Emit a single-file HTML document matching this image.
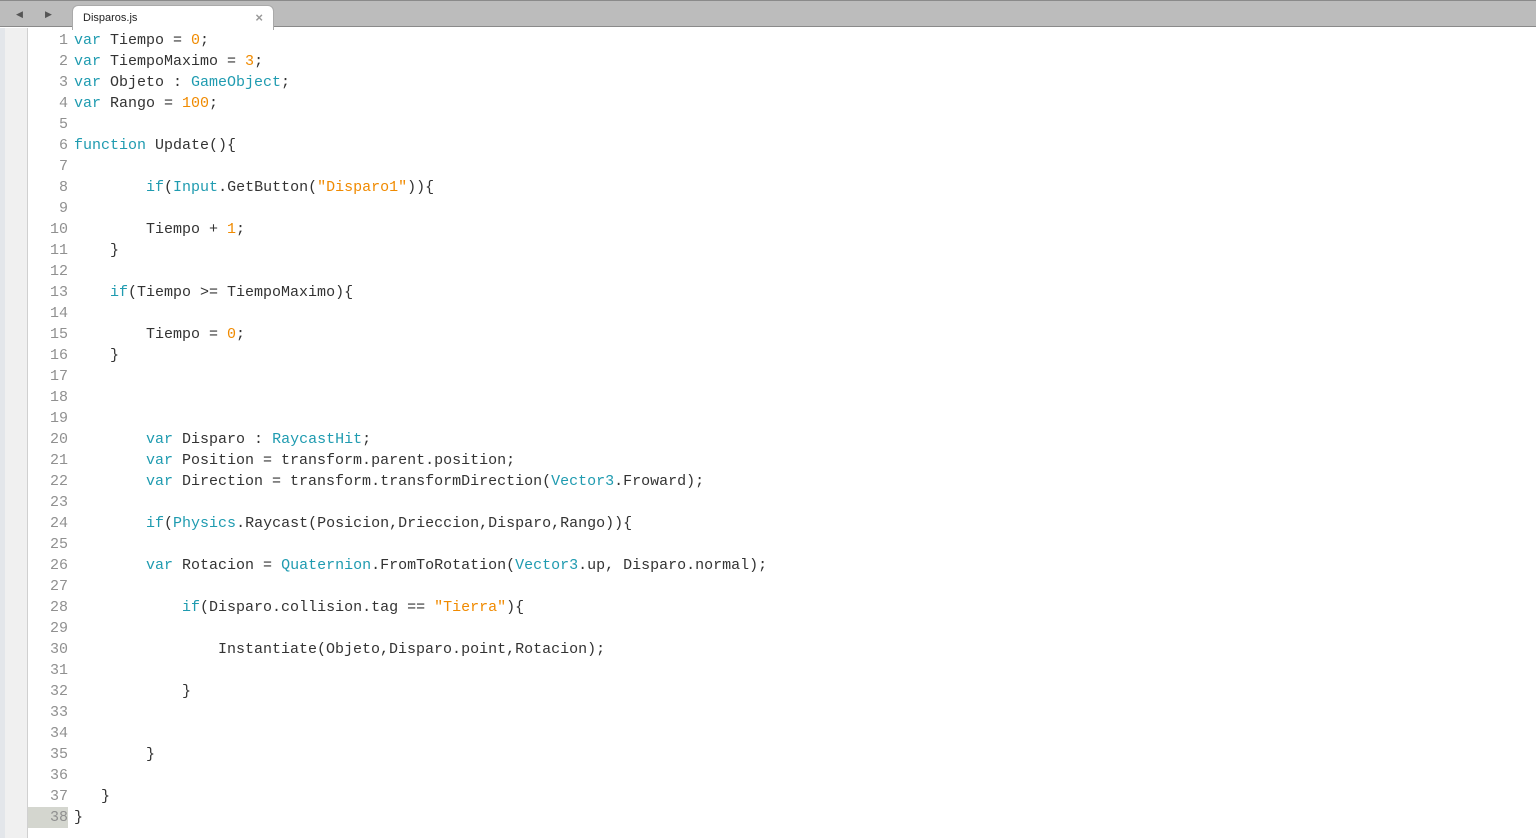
<!DOCTYPE html>
<html><head><style>
body{margin:0;width:1536px;height:838px;overflow:hidden;background:#fff;position:relative;font-family:"Liberation Sans",sans-serif}
.bar{position:absolute;left:0;top:0;width:1536px;height:27px;background:#bcbcbc;border-top:1px solid #8a8a8a;border-bottom:1px solid #8a8a8a;box-sizing:border-box}
.tab{position:absolute;left:72px;top:4px;width:202px;height:25px;background:#fff;border:1px solid #aaa;border-bottom:none;border-radius:6px 6px 0 0;box-sizing:border-box}
.tab span{position:absolute;left:10px;top:6px;font-size:11px;color:#222}
.tab b{position:absolute;right:10px;top:4px;font-size:13px;color:#999;font-weight:bold}
.arr{position:absolute;top:8px;font-size:9px;color:#555}
.ls{position:absolute;left:0;top:28px;width:5px;height:810px;background:#e3e6ea}
.gut{position:absolute;left:5px;top:28px;width:22px;height:810px;background:#f0f0f0;border-right:1px solid #d0d0d0}
.code{position:absolute;left:28px;top:30px;font-family:"Liberation Mono",monospace;font-size:15px;line-height:21px;color:#333;white-space:pre}
.n{display:inline-block;width:40px;text-align:right;color:#909090;margin-right:6px}
.cur{background:#d4d6cf}
.k{color:#1f9bb0}.o{color:#f08a00}
</style></head><body>
<div class="bar"><span class="arr" style="left:16px">◀</span><span class="arr" style="left:45px">▶</span><div class="tab"><span>Disparos.js</span><b>×</b></div></div>
<div class="ls"></div><div class="gut"></div>
<div class="code"><span class="n">1</span><span class="k">var</span> Tiempo = <span class="o">0</span>;
<span class="n">2</span><span class="k">var</span> TiempoMaximo = <span class="o">3</span>;
<span class="n">3</span><span class="k">var</span> Objeto : <span class="k">GameObject</span>;
<span class="n">4</span><span class="k">var</span> Rango = <span class="o">100</span>;
<span class="n">5</span>
<span class="n">6</span><span class="k">function</span> Update(){
<span class="n">7</span>
<span class="n">8</span>        <span class="k">if</span>(<span class="k">Input</span>.GetButton(<span class="o">"Disparo1"</span>)){
<span class="n">9</span>
<span class="n">10</span>        Tiempo + <span class="o">1</span>;
<span class="n">11</span>    }
<span class="n">12</span>
<span class="n">13</span>    <span class="k">if</span>(Tiempo &gt;= TiempoMaximo){
<span class="n">14</span>
<span class="n">15</span>        Tiempo = <span class="o">0</span>;
<span class="n">16</span>    }
<span class="n">17</span>
<span class="n">18</span>
<span class="n">19</span>
<span class="n">20</span>        <span class="k">var</span> Disparo : <span class="k">RaycastHit</span>;
<span class="n">21</span>        <span class="k">var</span> Position = transform.parent.position;
<span class="n">22</span>        <span class="k">var</span> Direction = transform.transformDirection(<span class="k">Vector3</span>.Froward);
<span class="n">23</span>
<span class="n">24</span>        <span class="k">if</span>(<span class="k">Physics</span>.Raycast(Posicion,Drieccion,Disparo,Rango)){
<span class="n">25</span>
<span class="n">26</span>        <span class="k">var</span> Rotacion = <span class="k">Quaternion</span>.FromToRotation(<span class="k">Vector3</span>.up, Disparo.normal);
<span class="n">27</span>
<span class="n">28</span>            <span class="k">if</span>(Disparo.collision.tag == <span class="o">"Tierra"</span>){
<span class="n">29</span>
<span class="n">30</span>                Instantiate(Objeto,Disparo.point,Rotacion);
<span class="n">31</span>
<span class="n">32</span>            }
<span class="n">33</span>
<span class="n">34</span>
<span class="n">35</span>        }
<span class="n">36</span>
<span class="n">37</span>   }
<span class="n cur">38</span>}</div>
</body></html>
